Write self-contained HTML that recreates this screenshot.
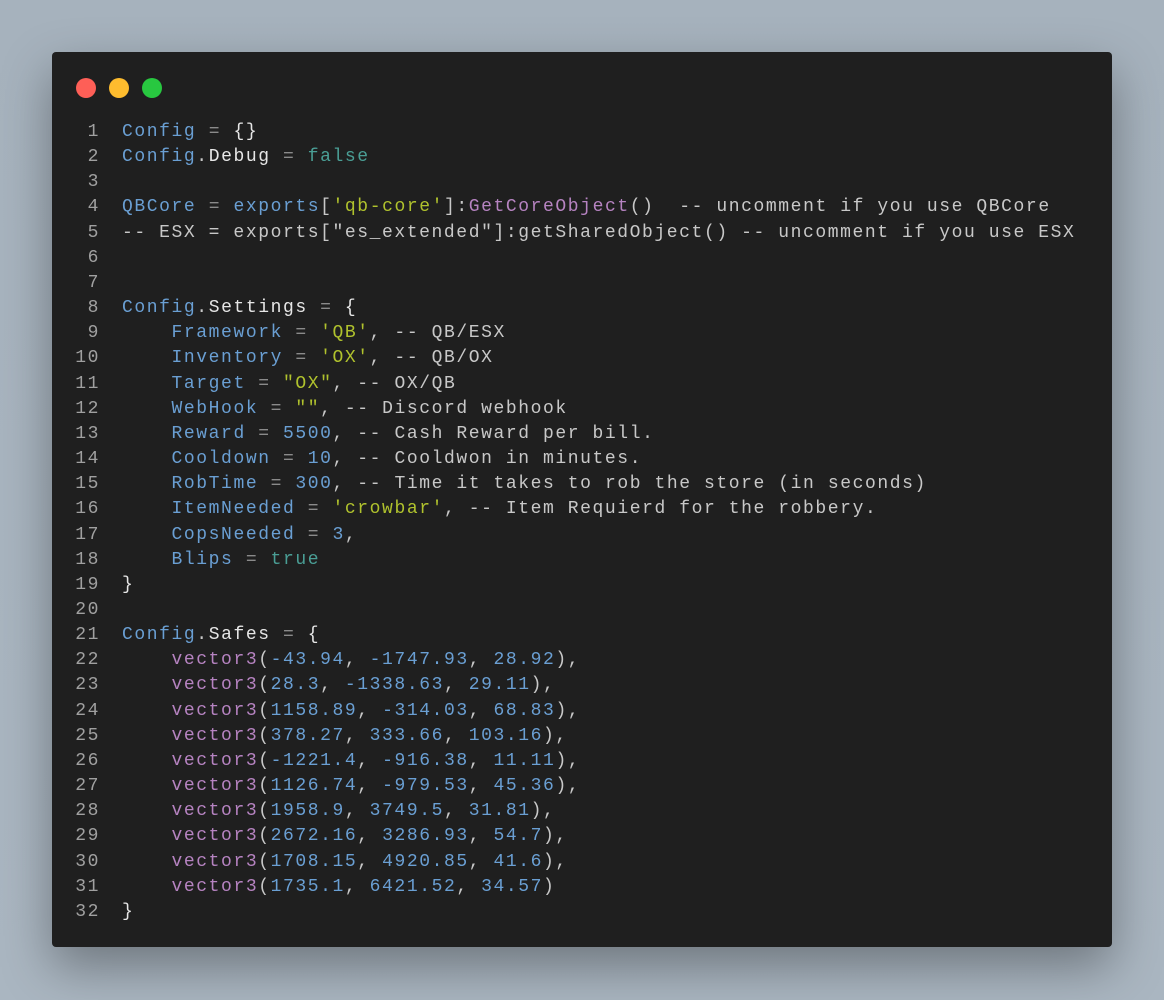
<!DOCTYPE html>
<html><head><style>
html,body{margin:0;padding:0;}
body{width:1164px;height:1000px;background:linear-gradient(180deg,#a6b2bd,#aab6c1);position:relative;overflow:hidden;font-family:"Liberation Mono","DejaVu Sans Mono",monospace;}
.win{position:absolute;left:52px;top:52px;width:1060px;height:895px;background:#1f1f1f;border-radius:4px;box-shadow:0 20px 50px rgba(0,0,0,0.35);}
.dot{position:absolute;top:26px;width:20px;height:20px;border-radius:50%;}
.code{position:absolute;left:0;top:68px;font-size:18px;letter-spacing:1.58px;line-height:25.16px;white-space:pre;color:#c8c8c8;}
.ln{display:inline-block;width:48px;text-align:right;color:#a0a0a0;margin-right:22px;}
.b{color:#6a9fd3}.p{color:#b683c1}.g{color:#b0c22d}.t{color:#4a9e95}.e{color:#8a8a8a}.w{color:#e6e6e6}
</style></head><body>
<div class="win">
<div class="dot" style="left:24px;background:#fe5f57"></div>
<div class="dot" style="left:57px;background:#febc2e"></div>
<div class="dot" style="left:90px;background:#28c840"></div>
<div class="code"><span class="ln">1</span><span class="b">Config</span> <span class="e">=</span> <span class="w">{}</span>
<span class="ln">2</span><span class="b">Config</span>.<span class="w">Debug</span> <span class="e">=</span> <span class="t">false</span>
<span class="ln">3</span>
<span class="ln">4</span><span class="b">QBCore</span> <span class="e">=</span> <span class="b">exports</span>[<span class="g">'qb-core'</span>]:<span class="p">GetCoreObject</span>()  -- uncomment if you use QBCore
<span class="ln">5</span>-- ESX = exports["es_extended"]:getSharedObject() -- uncomment if you use ESX
<span class="ln">6</span>
<span class="ln">7</span>
<span class="ln">8</span><span class="b">Config</span>.<span class="w">Settings</span> <span class="e">=</span> <span class="w">{</span>
<span class="ln">9</span>    <span class="b">Framework</span> <span class="e">=</span> <span class="g">'QB'</span>, -- QB/ESX
<span class="ln">10</span>    <span class="b">Inventory</span> <span class="e">=</span> <span class="g">'OX'</span>, -- QB/OX
<span class="ln">11</span>    <span class="b">Target</span> <span class="e">=</span> <span class="g">"OX"</span>, -- OX/QB
<span class="ln">12</span>    <span class="b">WebHook</span> <span class="e">=</span> <span class="g">""</span>, -- Discord webhook
<span class="ln">13</span>    <span class="b">Reward</span> <span class="e">=</span> <span class="b">5500</span>, -- Cash Reward per bill.
<span class="ln">14</span>    <span class="b">Cooldown</span> <span class="e">=</span> <span class="b">10</span>, -- Cooldwon in minutes.
<span class="ln">15</span>    <span class="b">RobTime</span> <span class="e">=</span> <span class="b">300</span>, -- Time it takes to rob the store (in seconds)
<span class="ln">16</span>    <span class="b">ItemNeeded</span> <span class="e">=</span> <span class="g">'crowbar'</span>, -- Item Requierd for the robbery.
<span class="ln">17</span>    <span class="b">CopsNeeded</span> <span class="e">=</span> <span class="b">3</span>,
<span class="ln">18</span>    <span class="b">Blips</span> <span class="e">=</span> <span class="t">true</span>
<span class="ln">19</span><span class="w">}</span>
<span class="ln">20</span>
<span class="ln">21</span><span class="b">Config</span>.<span class="w">Safes</span> <span class="e">=</span> <span class="w">{</span>
<span class="ln">22</span>    <span class="p">vector3</span>(<span class="b">-43.94</span>, <span class="b">-1747.93</span>, <span class="b">28.92</span>),
<span class="ln">23</span>    <span class="p">vector3</span>(<span class="b">28.3</span>, <span class="b">-1338.63</span>, <span class="b">29.11</span>),
<span class="ln">24</span>    <span class="p">vector3</span>(<span class="b">1158.89</span>, <span class="b">-314.03</span>, <span class="b">68.83</span>),
<span class="ln">25</span>    <span class="p">vector3</span>(<span class="b">378.27</span>, <span class="b">333.66</span>, <span class="b">103.16</span>),
<span class="ln">26</span>    <span class="p">vector3</span>(<span class="b">-1221.4</span>, <span class="b">-916.38</span>, <span class="b">11.11</span>),
<span class="ln">27</span>    <span class="p">vector3</span>(<span class="b">1126.74</span>, <span class="b">-979.53</span>, <span class="b">45.36</span>),
<span class="ln">28</span>    <span class="p">vector3</span>(<span class="b">1958.9</span>, <span class="b">3749.5</span>, <span class="b">31.81</span>),
<span class="ln">29</span>    <span class="p">vector3</span>(<span class="b">2672.16</span>, <span class="b">3286.93</span>, <span class="b">54.7</span>),
<span class="ln">30</span>    <span class="p">vector3</span>(<span class="b">1708.15</span>, <span class="b">4920.85</span>, <span class="b">41.6</span>),
<span class="ln">31</span>    <span class="p">vector3</span>(<span class="b">1735.1</span>, <span class="b">6421.52</span>, <span class="b">34.57</span>)
<span class="ln">32</span><span class="w">}</span></div>
</div>
</body></html>
